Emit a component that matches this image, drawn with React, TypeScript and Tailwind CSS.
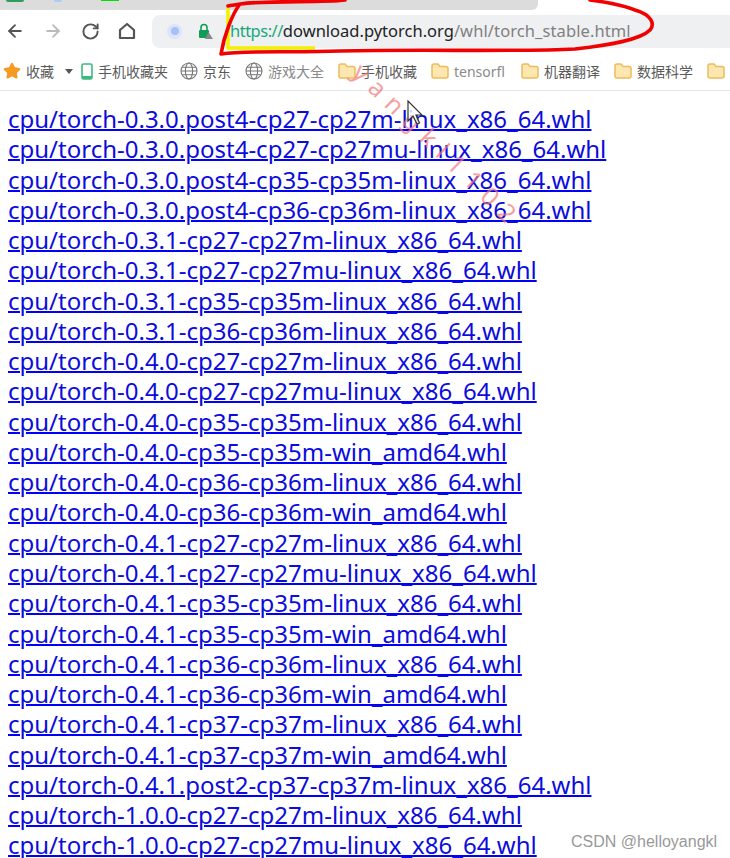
import { ArrowLeft, ArrowRight, RotateCw, Star } from "lucide-react";

const links = [
  "cpu/torch-0.3.0.post4-cp27-cp27m-linux_x86_64.whl",
  "cpu/torch-0.3.0.post4-cp27-cp27mu-linux_x86_64.whl",
  "cpu/torch-0.3.0.post4-cp35-cp35m-linux_x86_64.whl",
  "cpu/torch-0.3.0.post4-cp36-cp36m-linux_x86_64.whl",
  "cpu/torch-0.3.1-cp27-cp27m-linux_x86_64.whl",
  "cpu/torch-0.3.1-cp27-cp27mu-linux_x86_64.whl",
  "cpu/torch-0.3.1-cp35-cp35m-linux_x86_64.whl",
  "cpu/torch-0.3.1-cp36-cp36m-linux_x86_64.whl",
  "cpu/torch-0.4.0-cp27-cp27m-linux_x86_64.whl",
  "cpu/torch-0.4.0-cp27-cp27mu-linux_x86_64.whl",
  "cpu/torch-0.4.0-cp35-cp35m-linux_x86_64.whl",
  "cpu/torch-0.4.0-cp35-cp35m-win_amd64.whl",
  "cpu/torch-0.4.0-cp36-cp36m-linux_x86_64.whl",
  "cpu/torch-0.4.0-cp36-cp36m-win_amd64.whl",
  "cpu/torch-0.4.1-cp27-cp27m-linux_x86_64.whl",
  "cpu/torch-0.4.1-cp27-cp27mu-linux_x86_64.whl",
  "cpu/torch-0.4.1-cp35-cp35m-linux_x86_64.whl",
  "cpu/torch-0.4.1-cp35-cp35m-win_amd64.whl",
  "cpu/torch-0.4.1-cp36-cp36m-linux_x86_64.whl",
  "cpu/torch-0.4.1-cp36-cp36m-win_amd64.whl",
  "cpu/torch-0.4.1-cp37-cp37m-linux_x86_64.whl",
  "cpu/torch-0.4.1-cp37-cp37m-win_amd64.whl",
  "cpu/torch-0.4.1.post2-cp37-cp37m-linux_x86_64.whl",
  "cpu/torch-1.0.0-cp27-cp27m-linux_x86_64.whl",
  "cpu/torch-1.0.0-cp27-cp27mu-linux_x86_64.whl",
];

function Folder() {
  return (
    <svg width="18" height="16" viewBox="0 0 18 16" className="shrink-0">
      <path d="M1 3 Q1 1 3 1 H7 L9 3.5 H15 Q17 3.5 17 5.5 V13 Q17 15 15 15 H3 Q1 15 1 13 Z" fill="#fde7b0" stroke="#ecbc5c" strokeWidth="1.5" />
    </svg>
  );
}

function Globe() {
  return (
    <svg width="18" height="18" viewBox="0 0 18 18" fill="none" stroke="#777" strokeWidth="1.1" className="shrink-0">
      <circle cx="9" cy="9" r="8" />
      <ellipse cx="9" cy="9" rx="3.6" ry="8" />
      <path d="M1 9H17M2.2 5.2H15.8M2.2 12.8H15.8" />
    </svg>
  );
}

function Bookmark(props: { label: string; icon: React.ReactNode; width: number; fade?: boolean }) {
  return (
    <div className="flex shrink-0 items-center gap-[5px]" style={{ width: props.width }}>
      {props.icon}
      <span className={`overflow-hidden whitespace-nowrap text-[14px] ${props.fade ? "text-[#8a8a8a]" : "text-[#5a5a5a]"}`}>{props.label}</span>
    </div>
  );
}

export default function App() {
  return (
    <div className="relative h-[858px] w-[730px] overflow-hidden bg-white font-['Noto_Sans','Noto_Sans_CJK_SC',sans-serif]">
      {/* tab strip */}
      <div className="relative h-[10px] bg-white">
        <div className="h-[10px] w-[538px] rounded-br-md bg-[#dcdcdc]" />
        <div className="absolute left-[6px] top-0 h-[2px] w-[18px] rounded-b-full bg-[#2f9e5b]" />
        <div className="absolute left-[54px] top-0 h-[2px] w-[8px] rounded-b-full bg-[#a9cdf6]" />
        <div className="absolute left-[101px] top-0 h-[1px] w-[18px] bg-[#00e000]" />
      </div>

      {/* toolbar */}
      <div className="flex h-[42px] items-center bg-white pl-[5px]">
        <ArrowLeft size={20} color="#555" strokeWidth={2.2} />
        <ArrowRight size={20} color="#bbb" strokeWidth={2.2} className="ml-[18px]" />
        <RotateCw size={19} color="#555" strokeWidth={2.4} className="ml-[18px]" />
        <svg width="18" height="18" viewBox="0 0 18 18" fill="none" stroke="#555" strokeWidth="2.2" className="ml-[18px]">
          <path d="M2 8 9 2l7 6v8H2Z" strokeLinejoin="round" />
        </svg>
        <div className="ml-[16px] flex h-[33px] flex-1 items-center rounded-l-lg bg-[#eff0f2] pl-[15px]">
          <div className="flex h-[15px] w-[15px] items-center justify-center rounded-full bg-[#dbe4fb]">
            <div className="h-[8px] w-[8px] rounded-full bg-[#a9c0f6]" />
          </div>
          <svg width="16" height="16" viewBox="0 0 16 16" className="ml-[15px]">
            <path d="M4 7V4.5a3 3 0 0 1 6 0V7" fill="none" stroke="#0f9d58" strokeWidth="1.6" />
            <rect x="2" y="7" width="10" height="8" rx="1" fill="#0f9d58" />
            <path d="M11.5 9 16 16H8Z" fill="#888" />
          </svg>
          <div className="ml-[17px] whitespace-nowrap text-[16.5px]">
            <span className="tracking-[-0.5px] text-[#18a87a]">https://</span>
            <span className="text-[#222]">download.pytorch.org</span>
            <span className="tracking-[0.1px] text-[#808080]">/whl/torch_stable.html</span>
          </div>
        </div>
      </div>

      {/* bookmarks */}
      <div className="flex h-[39px] items-center gap-0 overflow-hidden border-b border-[#e6e6e6] pl-[3px]">
        <Bookmark width={60} label="收藏" icon={<Star size={18} fill="#f59a23" color="#f59a23" />} />
        <div className="mr-[8px] ml-[2px] h-0 w-0 border-x-[4px] border-t-[5px] border-x-transparent border-t-[#555]" />
        <Bookmark
          width={99}
          label="手机收藏夹"
          icon={
            <svg width="12" height="17" viewBox="0 0 12 17" className="shrink-0">
              <rect x="1" y="1" width="10" height="15" rx="1.5" fill="#fff" stroke="#3dbb7f" strokeWidth="1.6" />
              <rect x="1" y="13" width="10" height="3" fill="#3dbb7f" />
            </svg>
          }
        />
        <Bookmark width={65} label="京东" icon={<Globe />} />
        <Bookmark width={93} label="游戏大全" fade icon={<Globe />} />
        <Bookmark width={93} label="手机收藏" icon={<Folder />} />
        <Bookmark width={90} label="tensorfl" fade icon={<Folder />} />
        <Bookmark width={93} label="机器翻译" icon={<Folder />} />
        <Bookmark width={93} label="数据科学" icon={<Folder />} />
        <Bookmark width={24} label="" icon={<Folder />} />
      </div>

      {/* file list */}
      <div className="flex flex-col pl-[8px] pt-[13px]">
        {links.map((l) => (
          <a key={l} href="#" className="whitespace-nowrap text-[24px] leading-[30.27px] text-[#0c0cdc] underline decoration-[#0000ff] decoration-2">
            {l}
          </a>
        ))}
      </div>

      {/* marker scribble round the url */}
      <svg className="pointer-events-none absolute left-0 top-0" width="730" height="60" fill="none">
        <path d="M228 8 V48 H315" stroke="#f5f000" strokeWidth="3.5" />
        <path d="M228 6C232 5 236 5 240 4C232 14 224 36 221 54C250 50 290 53 340 51C420 49 520 52 575 49C610 45 640 40 650 30C655 24 652 15 635 10C620 4 605 2 590 0M240 4C270 0 320 3 345 0" stroke="#f00000" strokeWidth="3.6" strokeLinecap="round" strokeLinejoin="round" />
      </svg>

      {/* watermark */}
      <div className="pointer-events-none absolute left-[308px] top-[127px] w-[260px] rotate-[44deg] whitespace-nowrap text-center text-[25px] tracking-[9px] text-[#f27a7a] opacity-70">
        yangkl1102
      </div>

      {/* mouse cursor */}
      <svg className="pointer-events-none absolute left-[407px] top-[100px]" width="16" height="26" viewBox="0 0 16 26">
        <path d="M1 1V21L6 16L10 24L12.5 23L9 15H15Z" fill="#fff" fillOpacity="0.8" stroke="#333" strokeWidth="1.2" />
      </svg>

      <div className="absolute left-[571px] top-[830px] font-['Liberation_Sans',sans-serif] text-[16px] text-[#999]">
        CSDN @helloyangkl
      </div>
    </div>
  );
}
